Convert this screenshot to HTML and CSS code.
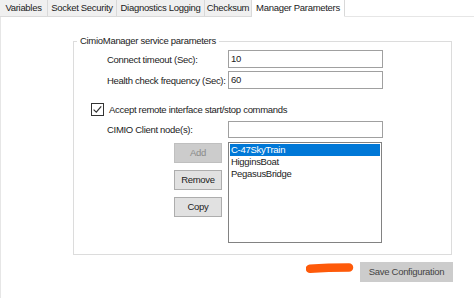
FILE: index.html
```html
<!DOCTYPE html>
<html>
<head>
  <meta charset='UTF-8'>
  <title>Manager Parameters</title>
  <link rel="stylesheet" href="styles.css">
</head>
<body>
  <div class='tabs'>
    <div class='tab t1'>Variables</div>
    <div class='tab t2'>Socket Security</div>
    <div class='tab t3'>Diagnostics Logging</div>
    <div class='tab t4'>Checksum</div>
    <div class='tab t5 on'>Manager Parameters</div>
    <div class='rest'></div>
  </div>

  <div class='page'>
    <fieldset class='grp'>
      <legend>CimioManager service parameters</legend>

      <div class='row'><span class='lb'>Connect timeout (Sec):</span><div class='in'>10</div></div>
      <div class='row'><span class='lb'>Health check frequency (Sec):</span><div class='in'>60</div></div>

      <div class='chk'>
        <svg width='13' height='13' viewBox='0 0 13 13'>
          <rect x='0.5' y='0.5' width='12' height='12' fill='#fff' stroke='#333'/>
          <path d='M2.6 6.6 L5.3 9.2 L10.2 3.4' fill='none' stroke='#333' stroke-width='1.2'/>
        </svg>
        <span>Accept remote interface start/stop commands</span>
      </div>

      <div class='row r3'><span class='lb'>CIMIO Client node(s):</span><div class='in'></div></div>

      <div class='lower'>
        <div class='btns'>
          <div class='btn off'>Add</div>
          <div class='btn'>Remove</div>
          <div class='btn'>Copy</div>
        </div>
        <div class='list'>
          <div class='it sel'>C-47SkyTrain</div>
          <div class='it'>HigginsBoat</div>
          <div class='it'>PegasusBridge</div>
        </div>
      </div>
    </fieldset>

    <div class='foot'>
      <svg class='mark' width='48' height='12' viewBox='0 0 48 12'>
        <path d='M4 6.8 C 14 6, 30 5.4, 43 5.4' fill='none' stroke='#fe5a0a' stroke-width='8.5' stroke-linecap='round'/>
      </svg>
      <div class='save'>Save Configuration</div>
    </div>
  </div>
</body>
</html>
```

FILE: styles.css
```css
body{margin:0;background:#fff;font-family:"Liberation Sans",Arial,sans-serif;font-size:9.5px;letter-spacing:-0.3px;color:#222;}
.tabs{display:flex;height:17px;}
.tab{background:#f0f0f0;border-right:1px solid #d9d9d9;border-bottom:1px solid #dadada;line-height:16px;white-space:nowrap;text-align:center;box-sizing:border-box;}
.t1{width:48px;}
.t2{width:69px;}
.t3{width:88px;}
.t4{width:47px;}
.t5{width:93px;}
.tab.on{background:#fff;border-bottom-color:#fff;}
.rest{flex:1;border-bottom:1px solid #e6e6e6;}
.page{height:281px;border-left:1px solid #e6e6e6;padding-top:18px;box-sizing:border-box;}
.grp{margin:0 0 0 72px;width:379px;height:220px;border:1px solid #dcdcdc;padding:0;box-sizing:border-box;}
.grp legend{padding:0 3px;margin-left:3px;line-height:12px;}
.row{display:flex;align-items:center;margin-top:3px;white-space:nowrap;}
.lb{width:121px;margin-left:33px;}
.in{width:151px;height:16px;border:1px solid #a0a0a0;line-height:16px;padding-left:2px;}
.chk{display:flex;align-items:center;margin:14px 0 0 17px;height:13px;}
.chk svg{margin-right:5px;}
.r3{margin-top:5px;}
.r3 .in{height:15px;}
.lower{display:flex;margin-top:4px;margin-left:100px;}
.btns{display:flex;flex-direction:column;gap:7px;margin-top:1px;}
.btn{width:46px;height:18px;line-height:18px;text-align:center;background:#e1e1e1;border:1px solid #adadad;}
.btn.off{background:#cccccc;border-color:#bfbfbf;color:#8a8a8a;}
.list{width:151px;height:98px;margin-left:6px;border:1px solid #828282;padding:1px 0 0 1px;}
.it{height:12px;line-height:12px;padding-left:1px;}
.it.sel{background:#0078d7;color:#fff;margin-right:1px;}
.foot{display:flex;justify-content:flex-end;width:452px;margin-top:7px;}
.mark{margin-right:6px;}
.save{width:93px;height:20px;line-height:20px;text-align:center;background:#cccccc;color:#444;}
```
